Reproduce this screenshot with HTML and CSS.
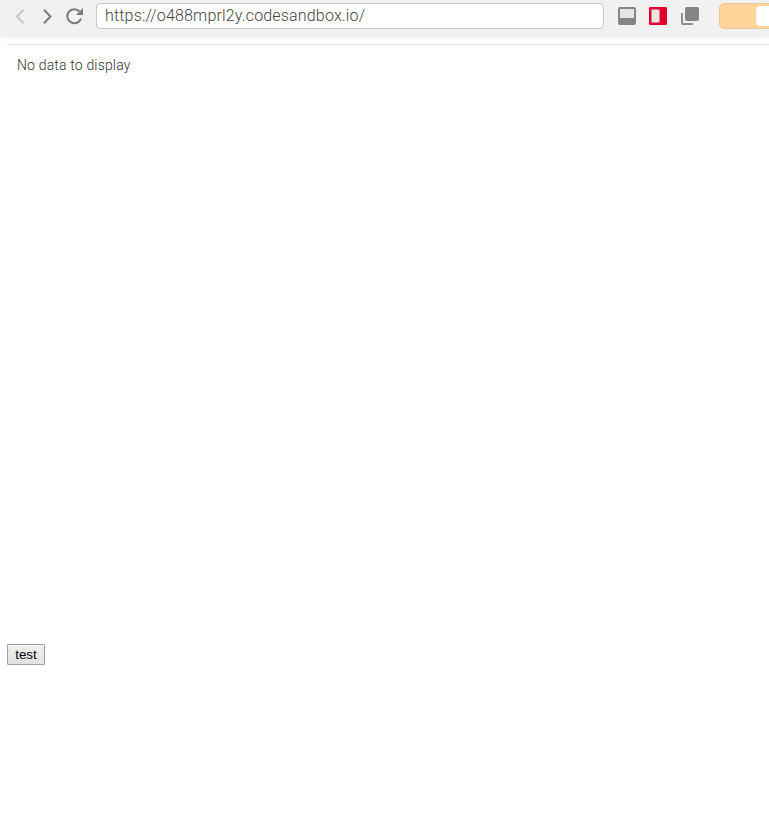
FILE: index.html
```html
<!DOCTYPE html>
<html lang="en">
  <head>
    <title>No data</title>
    <meta name="viewport" content="width=device-width, initial-scale=1">
    <link rel="stylesheet" href="styles.css">
  </head>
  <body>
    <div class="toolbar">
      <div class="nav-icons">
        <svg width="14" height="16" viewBox="0 0 14 16"><path d="M9.5 1.8 L3 8.5 L9.5 15.2" fill="none" stroke="#c8c8c8" stroke-width="2"/></svg>
        <svg width="14" height="16" viewBox="0 0 14 16"><path d="M4 1.8 L10.5 8.5 L4 15.2" fill="none" stroke="#7a7a7a" stroke-width="2"/></svg>
        <svg class="reload-icon" width="18" height="18" viewBox="0 0 18 18"><path d="M16 11.5 A7 7 0 1 1 14.5 4.5" fill="none" stroke="#7a7a7a" stroke-width="2"/><path d="M18 1 V8 H11 Z" fill="#7a7a7a"/></svg>
      </div>
      <div class="url-bar">https://o488mprl2y.codesandbox.io/</div>
      <div class="ext-icons">
        <svg width="18" height="18" viewBox="0 0 18 18"><rect width="18" height="18" rx="2" fill="#858585"/><rect x="2" y="2" width="14" height="9" fill="#e6e6e6"/></svg>
        <svg width="18" height="18" viewBox="0 0 18 18"><rect width="18" height="18" rx="1" fill="#e4002b"/><rect x="2.5" y="2.5" width="8" height="13" fill="#ebe6e6"/></svg>
        <svg class="copy-icon" width="18" height="18" viewBox="0 0 18 18"><rect x="4" width="14" height="14" rx="2" fill="#858585"/><path d="M1 6 V16 A1 1 0 0 0 2 17 H12" fill="none" stroke="#8f8f8f" stroke-width="2"/></svg>
      </div>
      <div class="toggle"><span class="toggle-knob"></span></div>
    </div>
    <div class="content">
      <hr class="divider">
      <div class="chart">No data to display</div>
      <button class="test-button">test</button>
    </div>
  </body>
</html>
```

FILE: styles.css
```css
html, body {
  margin: 0;
  padding: 0;
  background-color: #fff;
  overflow: hidden;
}
body {
  width: 769px;
  height: 818px;
  font-family: Roboto, Arial, sans-serif;
}
.toolbar {
  display: flex;
  align-items: center;
  height: 37px;
  box-sizing: border-box;
  padding-bottom: 5px;
  background-color: #f1f1f1;
  box-shadow: 0 1px 2px rgba(0, 0, 0, 0.06);
  overflow: hidden;
}
.nav-icons {
  display: flex;
  align-items: center;
  gap: 12px;
  margin-left: 14px;
}
.reload-icon {
  margin-left: -1px;
}
.url-bar {
  flex: none;
  width: 508px;
  height: 26px;
  box-sizing: border-box;
  margin-left: 13px;
  padding-left: 8px;
  background-color: #fff;
  border: 1px solid #c8c8c8;
  border-radius: 4px;
  font-size: 16px;
  font-weight: 300;
  line-height: 24px;
  letter-spacing: 0.17px;
  color: #444;
}
.ext-icons {
  display: flex;
  align-items: center;
  gap: 13px;
  margin-left: 14px;
}
.copy-icon {
  margin-left: 1px;
}
.toggle {
  flex: none;
  width: 70px;
  height: 26px;
  box-sizing: border-box;
  margin-left: 20px;
  padding: 2px 0 2px 36px;
  background-color: #ffd599;
  border: 1px solid #ebc78f;
  border-radius: 5px;
}
.toggle-knob {
  display: block;
  height: 20px;
  background-color: #fff;
  border-radius: 4px;
}
.content {
  padding: 7px 0 0 7px;
}
.divider {
  margin: 0;
  border: none;
  border-top: 1px solid #ddd;
}
.chart {
  height: 599px;
  padding: 11px 0 0 10px;
  box-sizing: border-box;
  font-size: 14px;
  font-weight: 300;
  line-height: 18px;
  letter-spacing: 0.17px;
  color: #333;
}
.test-button {
  display: block;
  height: 21px;
  width: 38px;
  padding: 0;
  font-family: "Liberation Sans", Arial, sans-serif;
  font-size: 13.33px;
  color: #000;
  background: linear-gradient(#f0f0f0, #e3e3e3);
  border: 1px solid #a0a0a0;
  border-radius: 1px;
}
```
